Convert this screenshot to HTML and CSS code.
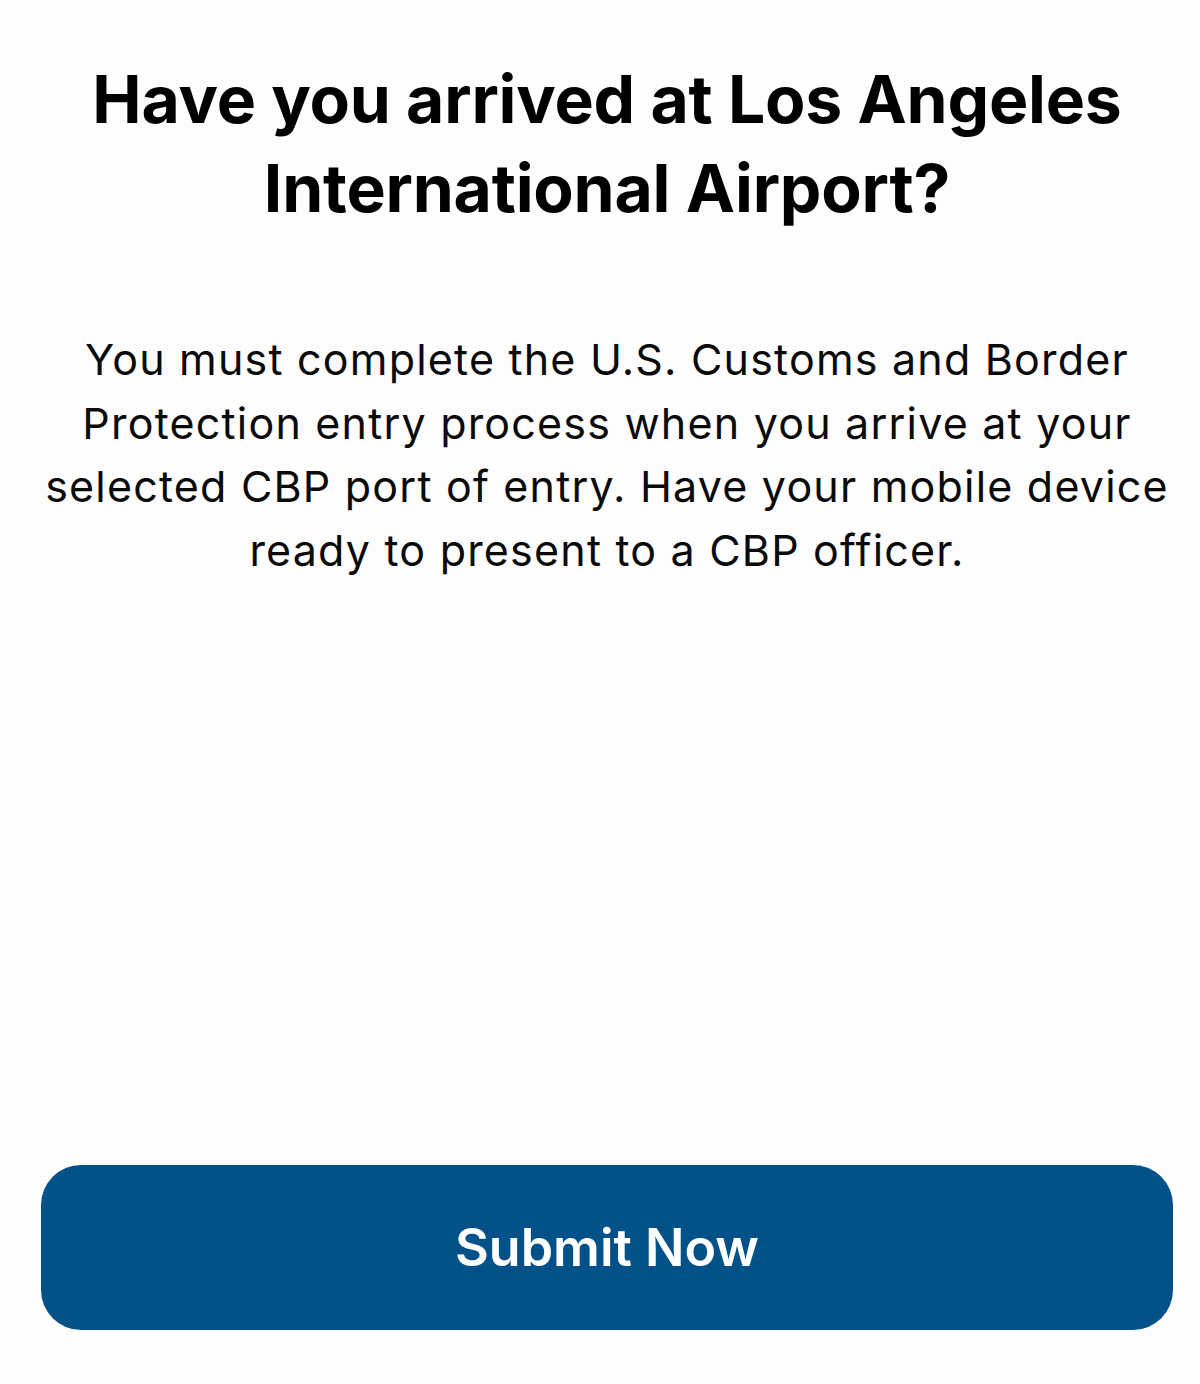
FILE: index.html
```html
<!DOCTYPE html>
<html lang="en">
<head>
<meta charset="utf-8">
<link rel="stylesheet" href="styles.css">
</head>
<body>
<main class="screen">
  <h1 class="title">Have you arrived at Los Angeles International Airport?</h1>
  <p class="body">You must complete the U.S. Customs and Border Protection entry process when you arrive at your selected CBP port of entry. Have your mobile device ready to present to a CBP officer.</p>
  <div class="spacer"></div>
  <button class="submit">Submit Now</button>
</main>
</body>
</html>
```
FILE: styles.css
```css
html, body {
  margin: 0;
  padding: 0;
  background: #fdfdfd;
}
.screen {
  box-sizing: border-box;
  height: 1384px;
  display: flex;
  flex-direction: column;
  padding: 55px 27px 54px 41px;
  font-family: Inter, "Liberation Sans", sans-serif;
  color: #000;
}
.title {
  margin: 0;
  font-size: 66px;
  line-height: 89px;
  font-weight: 700;
  text-align: center;
  letter-spacing: -0.2px;
  padding: 0 40px;
}
.body {
  margin: 95px 0 0;
  font-size: 43px;
  line-height: 63.5px;
  font-weight: 400;
  text-align: center;
  letter-spacing: 1.2px;
  color: #0a0a0a;
}
.spacer {
  flex: 1;
}
.submit {
  height: 165px;
  border: none;
  border-radius: 40px;
  background: #035189;
  color: #fff;
  font-family: Inter, "Liberation Sans", sans-serif;
  font-size: 52px;
  font-weight: 600;
}
```
